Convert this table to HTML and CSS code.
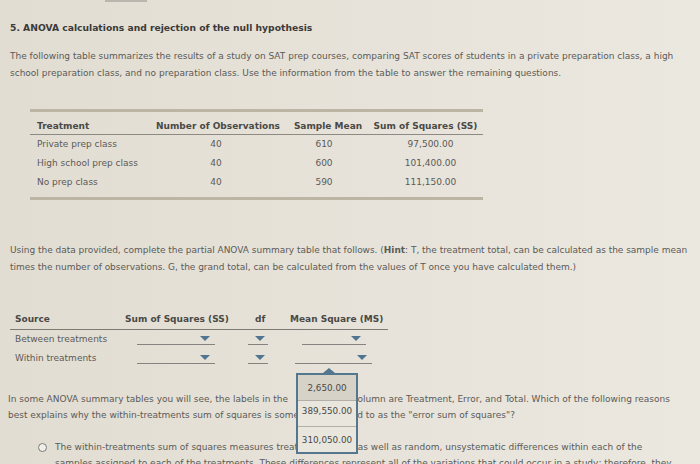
FILE: index.html
```html
<!DOCTYPE html>
<html lang="en">
<head>
<meta charset="utf-8">
<title>ANOVA calculations</title>
<link rel="stylesheet" href="styles.css">
</head>
<body>
<div class="page">
  <div class="tab"></div>
  <h2 class="title">5. ANOVA calculations and rejection of the null hypothesis</h2>
  <p class="para intro">The following table summarizes the results of a study on SAT prep courses, comparing SAT scores of students in a private preparation class, a high<br>school preparation class, and no preparation class. Use the information from the table to answer the remaining questions.</p>

  <table class="data">
    <thead>
      <tr>
        <th class="c-treat">Treatment</th>
        <th class="c-num">Number of Observations</th>
        <th class="c-mean">Sample Mean</th>
        <th class="c-ss">Sum of Squares (SS)</th>
      </tr>
    </thead>
    <tbody>
      <tr><td>Private prep class</td><td class="num">40</td><td class="num">610</td><td class="num">97,500.00</td></tr>
      <tr><td>High school prep class</td><td class="num">40</td><td class="num">600</td><td class="num">101,400.00</td></tr>
      <tr><td>No prep class</td><td class="num">40</td><td class="num">590</td><td class="num">111,150.00</td></tr>
    </tbody>
  </table>

  <p class="para hint">Using the data provided, complete the partial ANOVA summary table that follows. (<b>Hint</b>: T, the treatment total, can be calculated as the sample mean<br>times the number of observations. G, the grand total, can be calculated from the values of T once you have calculated them.)</p>

  <table class="anova">
    <thead>
      <tr>
        <th class="a-src">Source</th>
        <th class="a-ss">Sum of Squares (SS)</th>
        <th class="a-df">df</th>
        <th class="a-ms">Mean Square (MS)</th>
      </tr>
    </thead>
    <tbody>
      <tr>
        <td>Between treatments</td>
        <td><span class="select sel-ss"><span class="arrow"></span></span></td>
        <td><span class="select sel-df"><span class="arrow"></span></span></td>
        <td><span class="select sel-ms1"><span class="arrow"></span></span></td>
      </tr>
      <tr>
        <td>Within treatments</td>
        <td><span class="select sel-ss"><span class="arrow"></span></span></td>
        <td><span class="select sel-df"><span class="arrow"></span></span></td>
        <td><span class="select sel-ms2"><span class="arrow"></span></span></td>
      </tr>
    </tbody>
  </table>

  <p class="para question">In some ANOVA summary tables you will see, the labels in the <span class="term">Source</span> column are Treatment, Error, and Total. Which of the following reasons<br>best explains why the within-treatments sum of squares is sometimes referred to as the "error sum of squares"?</p>

  <div class="option">
    <span class="radio"></span>
    <p class="opt-text">The within-treatments sum of squares measures treatment effects as well as random, unsystematic differences within each of the<br>samples assigned to each of the treatments. These differences represent all of the variations that could occur in a study; therefore, they</p>
  </div>

  <div class="popup">
    <span class="pointer"></span>
    <ul class="choices">
      <li class="choice active">2,650.00</li>
      <li class="choice">389,550.00</li>
      <li class="choice">310,050.00</li>
    </ul>
  </div>
</div>
</body>
</html>
```

FILE: styles.css
```css
* { box-sizing: border-box; }

html, body {
  margin: 0;
  padding: 0;
}

body {
  background: linear-gradient(90deg, #e2ddd2 0%, #e7e3da 55%, #ebe8e0 100%);
  font-family: "DejaVu Sans", Verdana, sans-serif;
  font-size: 9px;
  color: #5b5a57;
  width: 700px;
  height: 464px;
  overflow: hidden;
}

.page {
  position: relative;
  height: 464px;
  padding: 0 10px;
  overflow: hidden;
}

.tab {
  width: 42px;
  height: 2px;
  margin-left: 95px;
  background: #b9b6b0;
}

.title {
  margin: 18px 0 0 0;
  font-size: 9.2px;
  line-height: 16px;
  font-weight: bold;
  color: #3b3a38;
}

.para {
  margin: 0;
  line-height: 17px;
  white-space: nowrap;
}

.intro {
  margin-top: 12px;
}

.data {
  margin: 27px 0 0 20px;
  width: 453px;
  border-collapse: collapse;
  border-top: 3px solid #bdb5a4;
  border-bottom: 3px solid #bdb5a4;
}

.data th {
  font-weight: bold;
  color: #4a4946;
  padding: 8px 0 2px;
  border-bottom: 1px solid #8d8a84;
  line-height: 12px;
}

.data td {
  padding: 0;
  height: 19.5px;
  line-height: 12px;
}

.data tbody tr:first-child td { padding-top: 0; height: 19px; }
.data tbody tr:last-child td { height: 25px; padding-bottom: 6px; }

.data .c-treat { text-align: left; width: 118px; padding-left: 7px; }
.data td:first-child { padding-left: 7px; }
.data .c-num { width: 140px; text-align: center; }
.data .c-mean { width: 80px; text-align: center; }
.data .c-ss { width: 115px; text-align: center; }
.data td.num { text-align: center; }
.data td:nth-child(2) { padding-right: 4px; }
.data td:nth-child(3) { padding-right: 8px; }
.data td:nth-child(4) { padding-left: 10px; }

.hint {
  margin-top: 42px;
  letter-spacing: -0.02px;
}

.anova {
  margin: 37px 0 0 0;
  width: 378px;
  border-collapse: collapse;
}

.anova th {
  font-weight: bold;
  color: #4a4946;
  text-align: left;
  padding: 0 0 4px;
  line-height: 12px;
  border-bottom: 1.5px solid #7c7a75;
}

.anova .a-src { width: 115px; padding-left: 5px; }
.anova .a-ss { width: 123px; }
.anova .a-df { width: 35px; padding-left: 7px; }
.anova .a-ms { padding-left: 7px; }

.anova td {
  padding: 0;
  height: 19px;
  line-height: 12px;
  vertical-align: middle;
}

.anova td:first-child { padding-left: 5px; }

.select {
  position: relative;
  display: block;
  height: 12px;
  border-bottom: 1.5px solid #858380;
}

.arrow {
  position: absolute;
  right: 5px;
  top: 3px;
  width: 0;
  height: 0;
  border-left: 5px solid transparent;
  border-right: 5px solid transparent;
  border-top: 5px solid #4f7591;
}

.sel-ss { margin-left: 12px; width: 78px; }
.sel-df { margin-left: 0; width: 20px; }
.sel-df .arrow { right: 3px; }
.sel-ms1 { margin-left: 19px; width: 64px; }
.sel-ms2 { margin-left: 12px; width: 77px; }

.question {
  margin-top: 24px;
  margin-left: -2px;
  line-height: 16px;
}

.question .term {
  margin-left: 8px;
  letter-spacing: 3.3px;
}

.option {
  display: flex;
  align-items: flex-start;
  margin-top: 16px;
}

.radio {
  flex: none;
  width: 9px;
  height: 9px;
  margin: 4px 0 0 28px;
  border: 1.5px solid #7b7a78;
  border-radius: 50%;
  background: #f1efea;
}

.opt-text {
  margin: 0 0 0 8px;
  line-height: 16px;
  white-space: nowrap;
}

.popup {
  position: absolute;
  left: 296px;
  top: 373px;
  width: 62px;
  height: 81px;
  border: 2px solid #53778f;
  background: #e9e6de;
}

.pointer {
  position: absolute;
  left: 25px;
  top: -7px;
  width: 0;
  height: 0;
  border-left: 6px solid transparent;
  border-right: 6px solid transparent;
  border-bottom: 5px solid #53778f;
}

.choices {
  list-style: none;
  margin: 0;
  padding: 0;
}

.choice {
  height: 26px;
  padding-top: 7px;
  text-align: center;
  font-size: 8.8px;
  line-height: 12px;
  color: #4a4946;
  border-bottom: 1px solid #b3afa7;
}

.choice.active {
  background: #d6d2c8;
}

.choice:nth-child(2) {
  padding-top: 4px;
}

.choice:last-child {
  border-bottom: none;
}
```
